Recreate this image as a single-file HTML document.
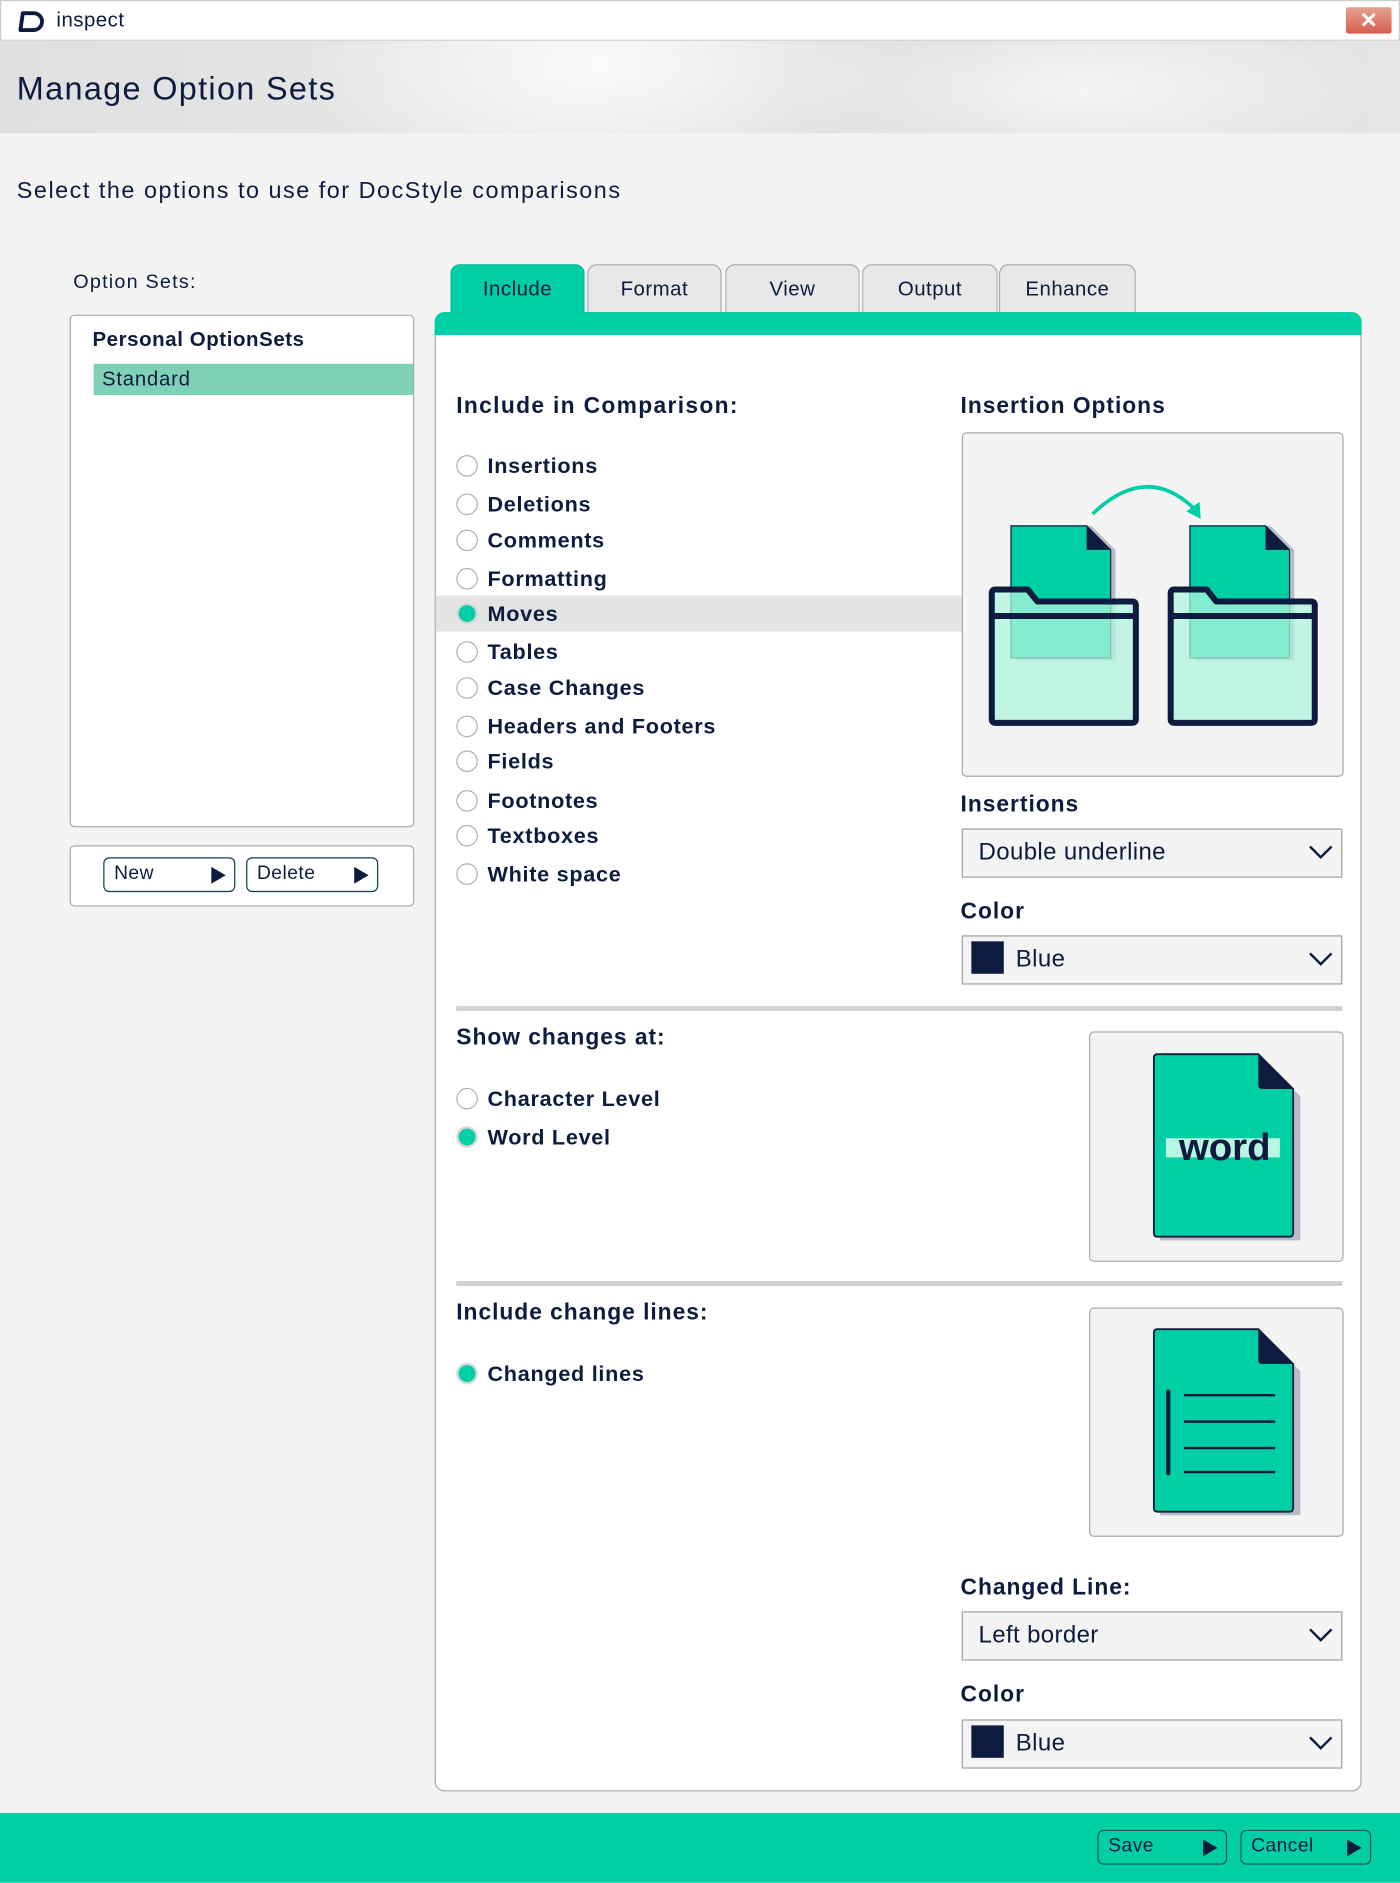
<!DOCTYPE html>
<html><head><meta charset="utf-8"><style>
*{margin:0;padding:0;box-sizing:border-box}
html,body{width:1400px;height:1882px;overflow:hidden;background:#f4f4f4}
#s{position:absolute;left:0;top:0;width:1166px;height:1568px;transform:scale(1.20069);transform-origin:0 0;font-family:"Liberation Sans",sans-serif;color:#0d1b3e;background:#f4f4f4}
.a{position:absolute;white-space:nowrap}
.b{font-weight:bold;letter-spacing:0.8px}
.tab{position:absolute;top:220px;height:41px;background:#e8e8e8;border:1px solid #a8a8a8;border-bottom:none;border-radius:8px 8px 0 0;font-size:17px;text-align:center;line-height:40px;letter-spacing:0.4px}
.rad{position:absolute;width:18px;height:18px;border-radius:50%;border:1px solid #b0b0b0;background:#fff}
.rad.on{background:#00cea5;border:2px solid #d8d8d8}
.lbl{position:absolute;font-size:18px;font-weight:bold;white-space:nowrap;line-height:20px;letter-spacing:0.6px}
.dd{position:absolute;left:801px;width:317px;height:41px;background:#f4f4f4;border:1px solid #a0a0a0;font-size:20px;line-height:39px;padding-left:13px;letter-spacing:0.3px}
.dd svg{position:absolute;right:6px;top:12px}
.sw{display:inline-block;width:27px;height:27px;background:#0d1b3e;vertical-align:-6px;margin-right:10px}
.box{position:absolute;background:#f4f4f4;border:1px solid #a8a8a8;border-radius:4px}
.btn{position:absolute;border:1px solid #0d3d4a;border-radius:5px;font-size:16px;line-height:26px;padding-left:8px;letter-spacing:0.4px}
.btn i{position:absolute;right:7px;top:7px;width:0;height:0;border-left:12px solid #0d1b3e;border-top:7px solid transparent;border-bottom:7px solid transparent}
</style></head><body><div id="s">
<!-- title bar -->
<div class="a" style="left:0;top:0;width:1166px;height:34px;background:#fff;border:1px solid #ccc"></div>
<svg class="a" style="left:14px;top:8px" width="26" height="20" viewBox="0 0 26 20"><path d="M5 3 H14 A7 7 0 0 1 14 17 H3 Z" fill="none" stroke="#0d1b3e" stroke-width="3.2" stroke-linejoin="round"/></svg>
<div class="a" style="left:47px;top:7px;font-size:17px;letter-spacing:0.4px">inspect</div>
<div class="a" style="left:1121px;top:6px;width:38px;height:22px;background:linear-gradient(#e8a090,#d86050);border-radius:2px;color:#fff;font-weight:bold;font-size:18px;text-align:center;line-height:22px">✕</div>
<!-- header -->
<div class="a" style="left:0;top:34px;width:1166px;height:77px;overflow:hidden;background:linear-gradient(90deg,#e0e0e0,#e8e8e8 40%,#dcdcdc 70%,#e6e6e6)">
<div class="a" style="left:250px;top:-80px;width:500px;height:200px;border-radius:50%;background:radial-gradient(closest-side,rgba(255,255,255,.8),rgba(255,255,255,0))"></div>
<div class="a" style="left:650px;top:-40px;width:500px;height:160px;border-radius:50%;background:radial-gradient(closest-side,rgba(255,255,255,.7),rgba(255,255,255,0))"></div>
<div class="a" style="left:14px;top:25px;font-size:27px;letter-spacing:1.1px">Manage Option Sets</div>
</div>
<div class="a" style="left:14px;top:148px;font-size:19.5px;letter-spacing:1.25px">Select the options to use for DocStyle comparisons</div>
<div class="a" style="left:61px;top:226px;font-size:16.5px;letter-spacing:1px">Option Sets:</div>
<!-- left list -->
<div class="a" style="left:58px;top:262px;width:287px;height:427px;background:#fff;border:1px solid #a8a8a8;border-radius:4px"></div>
<div class="a b" style="left:77px;top:273px;font-size:17px;letter-spacing:0.5px">Personal OptionSets</div>
<div class="a" style="left:78px;top:303px;width:266px;height:26px;background:#7fd1b5;font-size:17px;padding-left:7px;line-height:26px;letter-spacing:0.6px">Standard</div>
<div class="a" style="left:58px;top:704px;width:287px;height:51px;background:#fff;border:1px solid #a8a8a8;border-radius:4px"></div>
<div class="btn" style="left:86px;top:714px;width:110px;height:29px;background:#fff">New<i></i></div>
<div class="btn" style="left:205px;top:714px;width:110px;height:29px;background:#fff">Delete<i></i></div>
<!-- tabs -->
<div class="tab" style="left:375px;width:112px;background:#00cea5;border-color:#00b894">Include</div>
<div class="tab" style="left:489px;width:112px">Format</div>
<div class="tab" style="left:604px;width:112px">View</div>
<div class="tab" style="left:718px;width:113px">Output</div>
<div class="tab" style="left:832px;width:114px">Enhance</div>
<!-- panel -->
<div class="a" style="left:362px;top:260px;width:772px;height:1232px;background:#fff;border:1px solid #a8a8a8;border-radius:8px"></div>
<div class="a" style="left:362px;top:260px;width:772px;height:19px;background:#00cea5;border-radius:8px 8px 0 0"></div>
<div class="a b" style="left:380px;top:328px;font-size:19px;letter-spacing:1.1px">Include in Comparison:</div>
<div class="a b" style="left:800px;top:328px;font-size:19px">Insertion Options</div>
<div class="a" style="left:363px;top:496px;width:438px;height:30px;background:#e4e4e4"></div>
<div class="rad" style="left:380px;top:379px"></div><div class="lbl" style="left:406px;top:378px">Insertions</div>
<div class="rad" style="left:380px;top:411px"></div><div class="lbl" style="left:406px;top:410px">Deletions</div>
<div class="rad" style="left:380px;top:441px"></div><div class="lbl" style="left:406px;top:440px">Comments</div>
<div class="rad" style="left:380px;top:473px"></div><div class="lbl" style="left:406px;top:472px">Formatting</div>
<div class="rad on" style="left:380px;top:502px"></div><div class="lbl" style="left:406px;top:501px">Moves</div>
<div class="rad" style="left:380px;top:534px"></div><div class="lbl" style="left:406px;top:533px">Tables</div>
<div class="rad" style="left:380px;top:564px"></div><div class="lbl" style="left:406px;top:563px">Case Changes</div>
<div class="rad" style="left:380px;top:596px"></div><div class="lbl" style="left:406px;top:595px">Headers and Footers</div>
<div class="rad" style="left:380px;top:625px"></div><div class="lbl" style="left:406px;top:624px">Fields</div>
<div class="rad" style="left:380px;top:658px"></div><div class="lbl" style="left:406px;top:657px">Footnotes</div>
<div class="rad" style="left:380px;top:687px"></div><div class="lbl" style="left:406px;top:686px">Textboxes</div>
<div class="rad" style="left:380px;top:719px"></div><div class="lbl" style="left:406px;top:718px">White space</div>
<!-- folders image -->
<div class="box" style="left:801px;top:360px;width:318px;height:287px"></div>
<svg class="a" style="left:801px;top:360px" width="318" height="287" viewBox="801 360 318 287">
<path d="M910 428 Q955 385 995 424" fill="none" stroke="#00cea5" stroke-width="3"/>
<path d="M988 426 L1000 432 L999 418 Z" fill="#00cea5"/>
<g id="f">
<path d="M846 438 H909 L929 458 V550 H846 Z" fill="#b8bcc8"/>
<path d="M842 438 H905 L925 458 V548 H842 Z" fill="#00cea5" stroke="#0d1b3e" stroke-width="1"/>
<path d="M905 438 V458 H925 Z" fill="#0d1b3e"/>
<path d="M826 492 H858 L866 502 H945 V601 H826 Z" fill="#b0f5de" fill-opacity=".75"/>
<path d="M829 491 H856 L864 501 H943 Q946 501 946 504 V599 Q946 602 943 602 H829 Q826 602 826 599 V494 Q826 491 829 491 Z M826 513 H946" fill="none" stroke="#0d1b3e" stroke-width="5" stroke-linejoin="round"/>
</g>
<use href="#f" x="149"/>
</svg>
<div class="a b" style="left:800px;top:660px;font-size:19px">Insertions</div>
<div class="dd" style="top:690px">Double underline<svg width="22" height="14"><path d="M2 2 L11 11 L20 2" fill="none" stroke="#0d1b3e" stroke-width="2"/></svg></div>
<div class="a b" style="left:800px;top:749px;font-size:19px">Color</div>
<div class="dd" style="top:779px;padding-left:7px"><span class="sw"></span>Blue<svg width="22" height="14"><path d="M2 2 L11 11 L20 2" fill="none" stroke="#0d1b3e" stroke-width="2"/></svg></div>
<div class="a" style="left:380px;top:838px;width:738px;height:4px;background:#d0d0d0"></div>
<div class="a b" style="left:380px;top:854px;font-size:19px">Show changes at:</div>
<div class="rad" style="left:380px;top:906px"></div><div class="lbl" style="left:406px;top:905px">Character Level</div>
<div class="rad on" style="left:380px;top:938px"></div><div class="lbl" style="left:406px;top:937px">Word Level</div>
<div class="box" style="left:907px;top:859px;width:212px;height:192px"></div>
<svg class="a" style="left:907px;top:859px" width="212" height="192" viewBox="907 859 212 192">
<path d="M966 883 H1053 L1083 913 V1033 H966 Z" fill="#b8bcc8"/>
<path d="M964 878 H1048 L1077 907 V1027 Q1077 1030 1074 1030 H964 Q961 1030 961 1027 V881 Q961 878 964 878 Z" fill="#00cea5" stroke="#0d1b3e" stroke-width="1.5"/>
<path d="M1048 878 V904 Q1048 907 1051 907 H1077 Z" fill="#0d1b3e"/>
<rect x="971" y="948" width="95" height="16" fill="#b8f5e2"/>
<text x="1020" y="966" text-anchor="middle" font-family="Liberation Sans,sans-serif" font-weight="bold" font-size="32" fill="#0d1b3e">word</text>
</svg>
<div class="a" style="left:380px;top:1067px;width:738px;height:4px;background:#d0d0d0"></div>
<div class="a b" style="left:380px;top:1083px;font-size:19px">Include change lines:</div>
<div class="rad on" style="left:380px;top:1135px"></div><div class="lbl" style="left:406px;top:1134px">Changed lines</div>
<div class="box" style="left:907px;top:1089px;width:212px;height:191px"></div>
<svg class="a" style="left:907px;top:1089px" width="212" height="191" viewBox="907 1089 212 191">
<path d="M966 1112 H1053 L1083 1142 V1262 H966 Z" fill="#b8bcc8"/>
<path d="M964 1107 H1048 L1077 1136 V1256 Q1077 1259 1074 1259 H964 Q961 1259 961 1256 V1110 Q961 1107 964 1107 Z" fill="#00cea5" stroke="#0d1b3e" stroke-width="1.5"/>
<path d="M1048 1107 V1133 Q1048 1136 1051 1136 H1077 Z" fill="#0d1b3e"/>
<path d="M973 1159 V1227" stroke="#0d1b3e" stroke-width="3.5" stroke-linecap="round"/>
<path d="M986 1162 H1062 M986 1184 H1062 M986 1206 H1062 M986 1226 H1062" stroke="#0d1b3e" stroke-width="2"/>
</svg>
<div class="a b" style="left:800px;top:1312px;font-size:19px">Changed Line:</div>
<div class="dd" style="top:1342px">Left border<svg width="22" height="14"><path d="M2 2 L11 11 L20 2" fill="none" stroke="#0d1b3e" stroke-width="2"/></svg></div>
<div class="a b" style="left:800px;top:1401px;font-size:19px">Color</div>
<div class="dd" style="top:1432px;padding-left:7px"><span class="sw"></span>Blue<svg width="22" height="14"><path d="M2 2 L11 11 L20 2" fill="none" stroke="#0d1b3e" stroke-width="2"/></svg></div>
<!-- footer -->
<div class="a" style="left:0;top:1510px;width:1166px;height:58px;background:#00cea5"></div>
<div class="btn" style="left:914px;top:1524px;width:108px;height:29px;border-color:#0b5a52">Save<i></i></div>
<div class="btn" style="left:1033px;top:1524px;width:109px;height:29px;border-color:#0b5a52">Cancel<i></i></div>
</div></body></html>
